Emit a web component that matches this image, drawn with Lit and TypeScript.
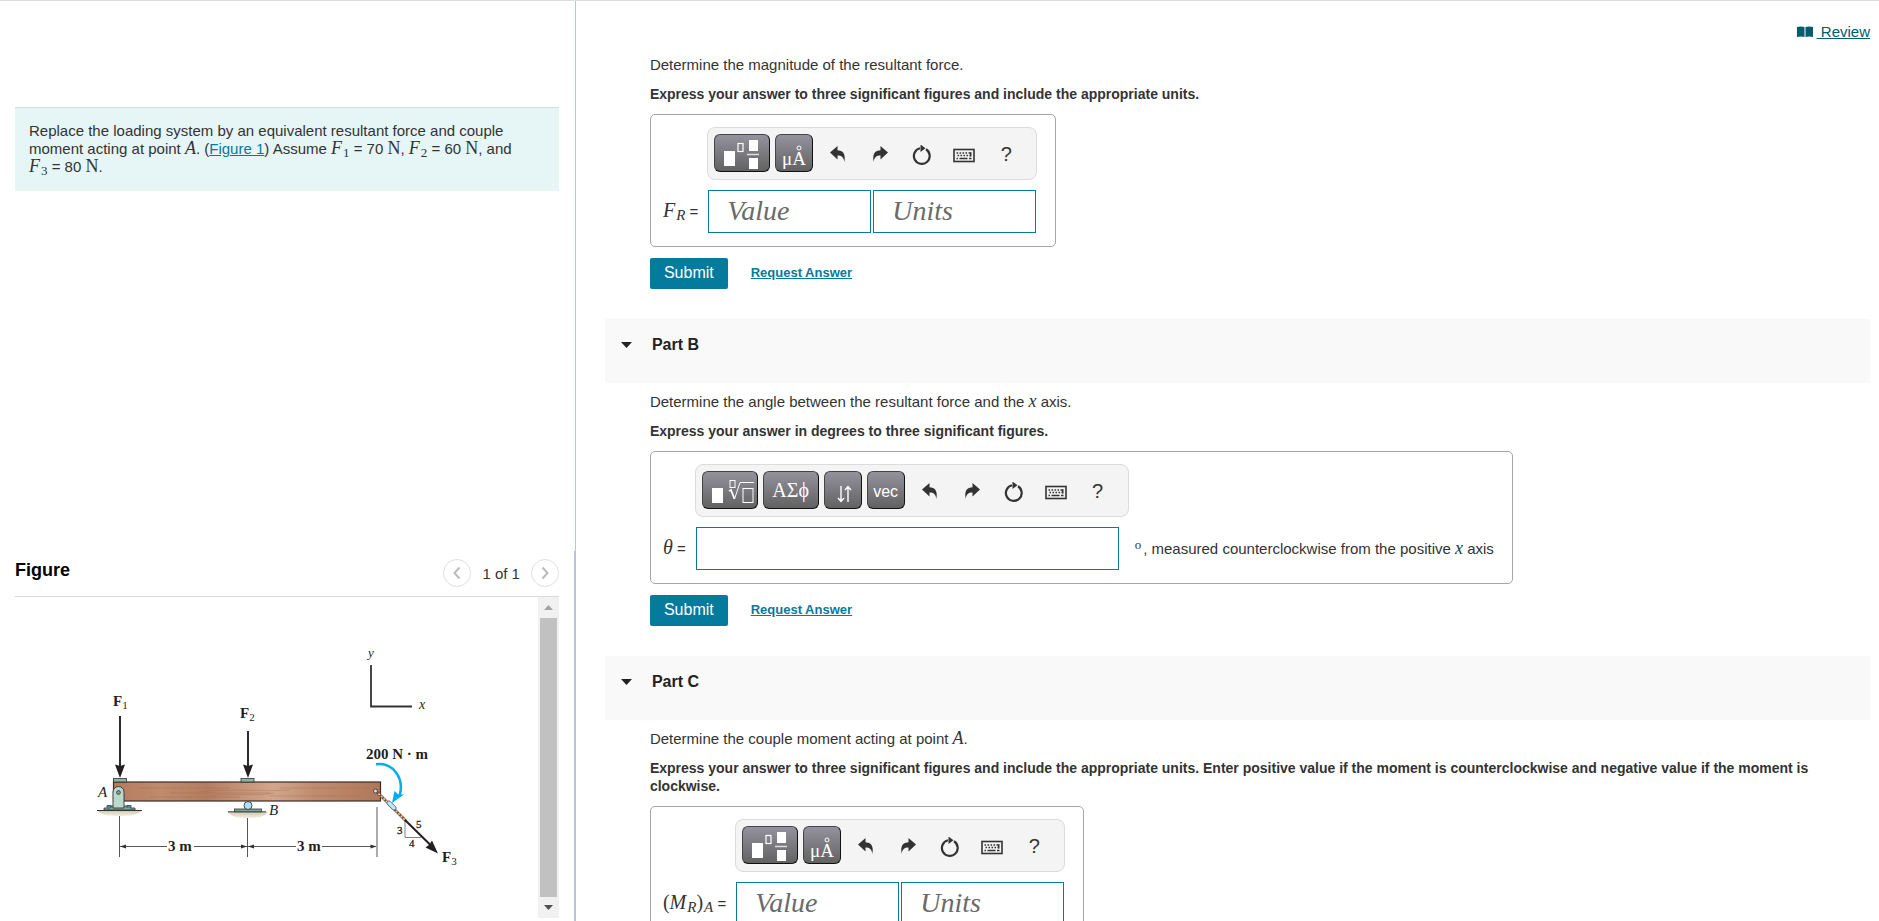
import { LitElement, html, svg, css, nothing } from "lit";
import { customElement, property } from "lit/decorators.js";

const shared = css`
  :host { box-sizing: border-box; }
  *, *::before, *::after { box-sizing: border-box; }
  .math { font-family: "Liberation Serif", "Times New Roman", serif; font-size: 18px; line-height: 16px; white-space: nowrap; }
  .math i { font-style: italic; }
  .math sub { padding-left: 1px; font-size: 13px; line-height: 10px; vertical-align: -3px; }
  .math sup { padding-right: 2px; font-size: 13px; line-height: 10px; vertical-align: 5px; }
  .term { white-space: nowrap; }
`;

const undoIcon = svg`<path d="M7.5 0 L7.5 4.2 C12.5 4.4 16.2 7.5 14.2 16 C14 11.5 11.5 9.6 7.5 9.6 L7.5 13.4 L0 6.6 Z" fill="#333"/>`;

@customElement("tool-bar")
class ToolBar extends LitElement {
  @property() kind = "units";

  static styles = [shared, css`
    :host { display: flex; align-items: center; padding: 6px 9px 7px 6px; background: #f4f4f4;
      border: 1px solid #dcdcdc; border-radius: 8px; width: max-content; height: 53px; }
    .keys { display: flex; gap: 5px; margin-right: 4px; }
    .key { height: 38px; width: 38px; padding: 0; border: 1px solid #111; border-top-color: #444; border-left-color: #444;
      border-radius: 6px; background: linear-gradient(#94929d, #626262); color: #fff;
      display: grid; place-items: center; font: 20px "Liberation Serif", "Times New Roman", serif; }
    .wide { width: 56px; }
    .sans { padding-top: 4px; font: 16px "Liberation Sans", Arial, sans-serif; }
    .tool { width: 42px; height: 38px; padding: 3px 0 0; border: 0; background: none; color: #333;
      display: grid; place-items: center; font: 20px "Liberation Sans", Arial, sans-serif; }
    svg { display: block; }
  `];

  render() {
    return html`
      <div class="keys">
        ${this.kind === "units" ? html`
          <button class="key wide" aria-label="Templates">
            <svg width="56" height="36" viewBox="0 0 56 36">
              <rect x="9" y="16" width="11" height="15" fill="#fff"/>
              <rect x="23" y="8.500" width="5" height="8" fill="none" stroke="#fff" stroke-width="1.200"/>
              <rect x="34" y="5" width="9" height="11" fill="#fff"/>
              <path d="M32 19.500H44" stroke="#ddd" stroke-width="1.500"/>
              <rect x="34" y="23" width="9" height="11" fill="#fff"/>
            </svg>
          </button>
          <button class="key" aria-label="Units">
            <svg width="36" height="36" viewBox="0 0 36 36" fill="#fff" font-family="Liberation Serif, serif" font-size="19">
              <text x="6" y="30">μA</text>
              <circle cx="23" cy="13" r="2" fill="none" stroke="#fff" stroke-width="1"/>
            </svg>
          </button>` : html`
          <button class="key wide" aria-label="Math templates">
            <svg width="56" height="36" viewBox="0 0 56 36" fill="none" stroke="#fff">
              <rect x="9" y="16" width="11" height="15" fill="#fff" stroke="none"/>
              <rect x="27" y="8.500" width="5" height="7"/>
              <path d="M26 19 l2 -1 l3.500 9" stroke-width="1.800"/>
              <path d="M31.500 27 L37 10.500 H51"/>
              <rect x="40" y="16.500" width="10" height="14"/>
            </svg>
          </button>
          <button class="key wide">ΑΣϕ</button>
          <button class="key" aria-label="Arrows">
            <svg width="36" height="36" viewBox="0 0 36 36" fill="none" stroke="#fff" stroke-width="1.400">
              <path d="M16 14 V29 M13 26 L16 29.500 L19 26"/>
              <path d="M23 30 V15 M20 18 L23 14.500 L26 18"/>
            </svg>
          </button>
          <button class="key sans">vec</button>`}
      </div>
      <button class="tool" aria-label="Undo">
        <svg width="16" height="18" viewBox="0 0 16 18">${undoIcon}</svg>
      </button>
      <button class="tool" aria-label="Redo">
        <svg width="16" height="18" viewBox="0 0 16 18"><g transform="matrix(-1 0 0 1 16 0)">${undoIcon}</g></svg>
      </button>
      <button class="tool" aria-label="Reset">
        <svg width="20" height="20" viewBox="0 0 20 20">
          <path d="M14 4.300 A7.900 7.900 0 1 1 8 3.300" fill="none" stroke="#333" stroke-width="2.200"/>
          <path d="M8.500 -0.500 L13.500 3.300 L8.500 7 Z" fill="#333"/>
        </svg>
      </button>
      <button class="tool" aria-label="Keyboard">
        <svg width="22" height="16" viewBox="0 0 22 16">
          <rect x="1" y="2.500" width="20" height="12" fill="none" stroke="#333" stroke-width="1.600"/>
          <path d="M3.500 6 H18 M4.500 8.500 H18" stroke="#333" stroke-width="1.600" stroke-dasharray="1.600 1.400"/>
          <path d="M17.700 5.200 V9.500" stroke="#333" stroke-width="1.600"/>
          <path d="M3.500 11.500 H5 M6.500 11.500 H14.500 M16 11.500 H18.500" stroke="#333" stroke-width="1.600"/>
        </svg>
      </button>
      <button class="tool">?</button>`;
  }
}

@customElement("answer-box")
class AnswerBox extends LitElement {
  @property() kind = "units";
  @property({ attribute: false }) label: unknown = nothing;
  @property({ attribute: false }) suffix: unknown = nothing;

  static styles = [shared, css`
    :host { display: block; color: #333; font: 15px/18px "Liberation Sans", Arial, sans-serif; }
    .box { display: grid; grid-template-columns: auto auto; width: max-content; max-width: 100%;
      row-gap: 10px; column-gap: 9px; padding: 12px 18px 13px 12px; border: 1px solid #a5a5a5; border-radius: 5px; }
    tool-bar { grid-column: 2; }
    .name { align-self: center; white-space: nowrap; }
    .name .math { font-size: 20px; }
    .name .math sub { font-size: 15px; }
    .fields { display: flex; align-items: center; gap: 2px; padding-left: 1px; white-space: nowrap; }
    .field { width: 163px; height: 43px; padding: 0 18px 2px; border: 1px solid #047a9c; border-radius: 0; background: #fff;
      font: italic 28px "Liberation Serif", "Times New Roman", serif; color: #333; outline: 0; }
    .field::placeholder { color: #6a6a6a; opacity: 1; }
    .long { width: 423px; }
    .suffix { padding-left: 14px; }
    .actions { display: flex; align-items: center; gap: 23px; margin-top: 11px; }
    .submit { height: 31px; padding: 0 14px 2px; border: 0; border-radius: 2px; background: #047a9c; color: #fff;
      font: 16px "Liberation Sans", Arial, sans-serif; }
    .request { padding-bottom: 2px; color: #047a9c; font-size: 13px; font-weight: bold; }
  `];

  render() {
    return html`
      <div class="box">
        <tool-bar .kind=${this.kind}></tool-bar>
        <label class="name" for="value">${this.label}</label>
        <div class="fields">
          ${this.kind === "units" ? html`
            <input class="field" id="value" placeholder="Value">
            <input class="field" aria-label="Units" placeholder="Units">` : html`
            <input class="field long" id="value">
            <span class="suffix">${this.suffix}</span>`}
        </div>
      </div>
      <div class="actions">
        <button class="submit">Submit</button>
        <a class="request" href="#">Request Answer</a>
      </div>`;
  }
}

@customElement("beam-figure")
class BeamFigure extends LitElement {
  static styles = css`
    :host { display: block; }
    svg { display: block; }
    .t { font-family: "Liberation Serif", "Times New Roman", serif; fill: #231f20; }
    .b { font-weight: bold; }
    .i { font-style: italic; }
  `;

  render() {
    return html`
      <svg width="400" height="240" viewBox="0 0 400 240" role="img" aria-label="Beam with three forces">
        <defs>
          <linearGradient id="wood" x1="0" x2="1">
            <stop offset="0" stop-color="#b47c5f"/><stop offset=".18" stop-color="#bf8a6e"/>
            <stop offset=".35" stop-color="#b57e62"/><stop offset=".6" stop-color="#d3a68c"/>
            <stop offset=".75" stop-color="#c08c70"/><stop offset="1" stop-color="#b0775a"/>
          </linearGradient>
          <linearGradient id="soil" x1="0" y1="0" x2="0" y2="1">
            <stop offset="0" stop-color="#cfc9ae"/><stop offset="1" stop-color="#f2f0e6"/>
          </linearGradient>
        </defs>
        <path d="M291 24 V65.500 H332" fill="none" stroke="#333" stroke-width="1.800"/>
        <text class="t i" x="288" y="16" font-size="13">y</text>
        <text class="t i" x="339" y="68" font-size="14">x</text>

        <rect x="33.500" y="141" width="267" height="19" fill="url(#wood)"/>
        <g stroke="#a46a4c" stroke-width=".7" fill="none" opacity=".5">
          <path d="M60 147 H150 M90 152 H190 M200 147 H290 M70 156 H160 M190 155 H280"/>
          <path d="M120 151 C150 147 180 151 210 149 M130 155 C150 151 170 156 195 152"/>
        </g>
        <rect x="33.500" y="141" width="267" height="19" fill="none" stroke="#3a2c26" stroke-width="1.200"/>
        <g fill="#8fb3a6" stroke="#333" stroke-width=".8">
          <rect x="33.500" y="137.500" width="13" height="3.500"/>
          <rect x="161" y="137.500" width="13" height="3.500"/>
        </g>

        <g stroke="#231f20" stroke-width="1.900">
          <path d="M40 75 V126"/><path d="M168 90 V126"/>
        </g>
        <g fill="#231f20">
          <path d="M35 123.500 L40 125 L45 123.500 L40 137 Z"/>
          <path d="M163 123.500 L168 125 L173 123.500 L168 137 Z"/>
        </g>
        <text class="t b" x="33" y="65" font-size="15">F<tspan font-size="11" dy="3" font-weight="normal">1</tspan></text>
        <text class="t b" x="160" y="77" font-size="15">F<tspan font-size="11" dy="3" font-weight="normal">2</tspan></text>

        <path d="M17 169.500 H62 C58 174 50 175 40 175 C28 175 20 174 17 169.500 Z" fill="url(#soil)"/>
        <path d="M17 169.500 H62" stroke="#333" stroke-width="1.200"/>
        <path d="M24 169 V167 H30 V165 H50 V167 H55 V169 Z" fill="#7fa59a" stroke="#333" stroke-width=".8"/>
        <path d="M27 167 V164.500 H31 V167 M47 167 V164.500 H51 V167" fill="#4f87a8" stroke="#2b4a5a" stroke-width=".8"/>
        <path d="M33 167 V151 A5.500 5.500 0 0 1 44 151 V167 Z" fill="#b9d9cd" stroke="#333" stroke-width=".9"/>
        <circle cx="38.500" cy="151.500" r="1.900" fill="#999" stroke="#333" stroke-width=".8"/>
        <text class="t i" x="18" y="156" font-size="15">A</text>

        <path d="M148 171 H188 C184 176 178 177 168 177 C158 177 151 176 148 171 Z" fill="url(#soil)"/>
        <path d="M148 170.800 H186" stroke="#333" stroke-width="1"/>
        <rect x="154.500" y="168" width="27" height="2.800" fill="#7fa59a" stroke="#333" stroke-width=".8"/>
        <circle cx="168" cy="164.500" r="4" fill="#aee0f7" stroke="#333" stroke-width=".9"/>
        <text class="t i" x="189" y="174" font-size="15">B</text>

        <g stroke="#444" stroke-width=".9">
          <path d="M39.500 175 V216 M167.500 177 V216 M297 166 V216"/>
          <path d="M40 205.500 H87 M114 205.500 H216 M242 205.500 H296" />
        </g>
        <g fill="#333">
          <path d="M40 205.500 L46 203.500 V207.500 Z M167 205.500 L161 203.500 V207.500 Z"/>
          <path d="M168 205.500 L174 203.500 V207.500 Z M296.500 205.500 L290.500 203.500 V207.500 Z"/>
        </g>
        <text class="t b" x="88" y="210" font-size="15">3 m</text>
        <text class="t b" x="217" y="210" font-size="15">3 m</text>

        <path d="M296 150 L326 180" stroke="#6d4c33" stroke-width="2.600"/>
        <path d="M296 150 L326 180" stroke="#e2cba8" stroke-width="1.600" stroke-dasharray="2 1.500"/>
        <circle cx="295.500" cy="150" r="2" fill="#ddd" stroke="#333" stroke-width=".8"/>
        <rect x="306" y="162.500" width="11" height="4" rx="1.500" transform="rotate(45 311.500 164.500)" fill="#bfe6f8" stroke="#446" stroke-width=".7"/>
        <path d="M325 179 V196.500 H341" fill="none" stroke="#777" stroke-width=".9"/>
        <path d="M325 179 L351 204.500" stroke="#231f20" stroke-width="2"/>
        <path d="M358 212.500 L345.500 206.500 L349.500 203.500 L352 199.500 Z" fill="#231f20"/>
        <g class="t" font-size="11" stroke="#231f20" stroke-width=".3">
          <text x="317" y="193">3</text>
          <text x="336" y="187">5</text>
          <text x="329" y="206">4</text>
        </g>
        <text class="t b" x="362" y="221" font-size="15">F<tspan font-size="11" dy="3" font-weight="normal">3</tspan></text>

        <text class="t b" x="286" y="118" font-size="15">200 N · m</text>
        <path d="M296 123.300 C312 121 325 136 319.500 155" fill="none" stroke="#00aeef" stroke-width="2.500"/>
        <path d="M312 162 L314.500 150 L318.500 153.500 L324 153.500 Z" fill="#00aeef"/>
      </svg>`;
  }
}

@customElement("app-root")
class AppRoot extends LitElement {
  static styles = [shared, css`
    :host { display: flex; height: 100vh; overflow: hidden; border-top: 1px solid #ddd; background: #fff;
      color: #333; font: 15px/18px "Liberation Sans", Arial, sans-serif; }
    a { color: #047a9c; }
    h2, h3, p { margin: 0; }
    .left { width: 30.65%; flex: none; display: flex; flex-direction: column; border-right: 1px solid #b4c8dc; }
    .problem { flex: 1; min-height: 0; padding: 106px 16px 0 15px; }
    .prompt { padding: 14px 14px 15px; border-top: 1px solid #d0dcdc; background: #e6f6f6; }
    .figure { flex: 0 0 370px; padding: 0 15px 3px; display: flex; flex-direction: column; border-right: 1px solid #b4c8dc; }
    .head { display: flex; align-items: center; justify-content: space-between; height: 46px; padding-bottom: 8px;
      border-bottom: 1px solid #dadada; }
    .title { font-size: 18px; line-height: 22px; color: #000; }
    .pager { display: flex; align-items: center; gap: 11px; padding-top: 6px; }
    .pager span { padding-top: 3px; }
    .round { width: 28px; height: 28px; padding: 0; border: 1px solid #e0e0e0; border-radius: 50%; background: #fff;
      display: grid; place-items: center; }
    .view { flex: 1; min-height: 0; display: flex; justify-content: space-between; overflow: hidden; }
    .canvas { padding: 44px 0 0 65px; }
    .bar { width: 21px; flex: none; background: #f1f1f1; display: flex; flex-direction: column; align-items: center; }
    .cap { height: 21px; display: grid; place-items: center; }
    .thumb { flex: 1; width: 17px; background: #c1c1c1; }
    .right { flex: 1; min-width: 0; padding: 22px 9px 0 29px; overflow: hidden; }
    .review { display: flex; justify-content: flex-end; align-items: center; gap: 4px; height: 18px; }
    .review a { color: #005a70; white-space: pre; }
    .body { padding: 10px 0 30px 45px; }
    .first { padding-top: 15px; }
    .text { margin-bottom: 11px; }
    .ask { margin-bottom: 11px; font-weight: bold; font-size: 14px; }
    .part { display: flex; gap: 20px; height: 64px; padding: 17px 16px; background: #f9f9f9; }
    .part h3 { font-size: 16px; line-height: 18px; color: #222; }
    .part svg { margin-top: 6px; }
  `];

  private part(name: string) {
    return html`<div class="part">
      <svg width="11" height="6" viewBox="0 0 11 6"><path d="M0 0H11L5.500 6Z" fill="#222"/></svg>
      <h3>${name}</h3>
    </div>`;
  }

  private arrow(d: string, label: string) {
    return html`<button class="round" aria-label=${label}>
      <svg width="10" height="14" viewBox="0 0 10 14"><path d=${d} fill="none" stroke="#bbb" stroke-width="2"/></svg>
    </button>`;
  }

  private force(index: number, value: number) {
    return html`<span class="term"><span class="math"><i>F</i><sub>${index}</sub></span> = ${value} <span class="math">N</span></span>`;
  }

  render() {
    return html`
      <aside class="left">
        <section class="problem">
          <div class="prompt">Replace the loading system by an equivalent resultant force and couple moment acting at point
            <span class="math"><i>A</i></span>. (<a href="#">Figure 1</a>) Assume
            ${this.force(1, 70)}, ${this.force(2, 60)}, and ${this.force(3, 80)}.</div>
        </section>
        <section class="figure">
          <div class="head">
            <h2 class="title">Figure</h2>
            <div class="pager">
              ${this.arrow("M7.500 1.500L2.500 7L7.500 12.500", "Previous")}
              <span>1 of 1</span>
              ${this.arrow("M2.500 1.500L7.500 7L2.500 12.500", "Next")}
            </div>
          </div>
          <div class="view">
            <div class="canvas"><beam-figure></beam-figure></div>
            <div class="bar">
              <div class="cap"><svg width="9" height="5"><path d="M0 5H9L4.500 0Z" fill="#a3a3a3"/></svg></div>
              <div class="thumb"></div>
              <div class="cap"><svg width="9" height="5"><path d="M0 0H9L4.500 5Z" fill="#505050"/></svg></div>
            </div>
          </div>
        </section>
      </aside>
      <main class="right">
        <div class="review">
          <svg width="16" height="12" viewBox="0 0 16 12"><path d="M0 1 Q4 0 7.500 1 V11 Q4 10 0 11 Z M8.500 1 Q12 0 16 1 V11 Q12 10 8.500 11 Z" fill="#005a70"/></svg>
          <a href="#"> Review</a>
        </div>
        <div class="body first">
          <p class="text">Determine the magnitude of the resultant force.</p>
          <p class="ask">Express your answer to three significant figures and include the appropriate units.</p>
          <answer-box .label=${html`<span class="math"><i>F<sub>R</sub></i></span> =`}></answer-box>
        </div>
        ${this.part("Part B")}
        <div class="body">
          <p class="text">Determine the angle between the resultant force and the <span class="math"><i>x</i></span> axis.</p>
          <p class="ask">Express your answer in degrees to three significant figures.</p>
          <answer-box kind="math" .label=${html`<span class="math"><i>θ</i></span> =`}
            .suffix=${html`<span class="math"><sup>o</sup></span>, measured counterclockwise from the positive <span class="math"><i>x</i></span> axis`}></answer-box>
        </div>
        ${this.part("Part C")}
        <div class="body">
          <p class="text">Determine the couple moment acting at point <span class="math"><i>A</i></span>.</p>
          <p class="ask">Express your answer to three significant figures and include the appropriate units. Enter positive value if the moment is counterclockwise and negative value if the moment is clockwise.</p>
          <answer-box .label=${html`<span class="math">(<i>M<sub>R</sub></i>)<sub><i>A</i></sub></span> =`}></answer-box>
        </div>
      </main>`;
  }
}
